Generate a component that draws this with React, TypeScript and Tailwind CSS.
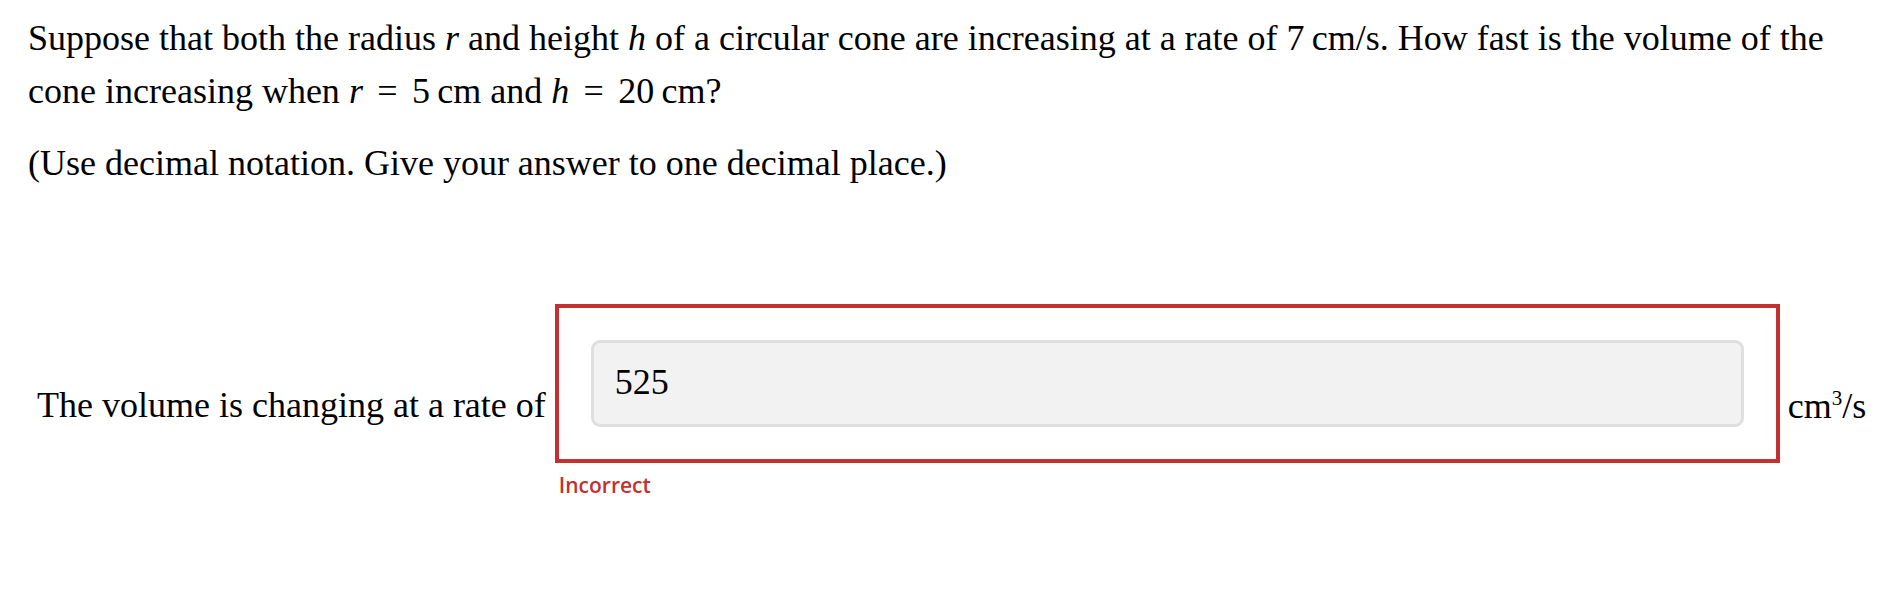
import React from "react";

export default function App() {
  const serif = { fontFamily: '"Liberation Serif", "Times New Roman", serif' };
  return (
    <div className="w-[1896px] h-[616px] bg-white text-black overflow-hidden" style={serif}>
      <div className="pl-[28px] pr-[30px] pt-[12px]">
        <p className="text-[36px] leading-[53px]">
          Suppose that both the radius <i>r</i> and height <i>h</i> of a circular cone are increasing at a rate of 7{"\u2009"}cm/s. How fast is the volume of the cone increasing when <i>r</i>
          <span className="mx-[0.4em]">=</span>5<span className="ml-[0.2em]">cm</span> and <i>h</i>
          <span className="mx-[0.4em]">=</span>20<span className="ml-[0.2em]">cm</span>?
        </p>
        <p className="text-[36px] leading-[53px] mt-[19px]">
          (Use decimal notation. Give your answer to one decimal place.)
        </p>
      </div>

      <div className="flex items-start pl-[37px] mt-[114px]">
        <div className="text-[36px] leading-[36px] mt-[83px] whitespace-nowrap">
          The volume is changing at a rate of
        </div>
        <div className="flex flex-col ml-[9px]">
          <div className="w-[1225px] h-[159px] border-[4px] border-[#c4302f] p-[32px]">
            <div className="h-[87px] rounded-[9px] border-[3px] border-[#dfdfdf] bg-[#f2f2f2] flex items-center pl-[21px] pb-[4px] text-[36px]">
              525
            </div>
          </div>
          <div
            className="mt-[10px] ml-[4px] text-[21px] leading-[1.2] font-semibold text-[#c4302f]"
            style={{ fontFamily: '"Open Sans", "Noto Sans", sans-serif' }}
          >
            Incorrect
          </div>
        </div>
        <div className="text-[36px] leading-[36px] mt-[84px] ml-[8px] whitespace-nowrap">
          cm<sup className="text-[21px] relative top-[-13px] align-baseline">3</sup>/s
        </div>
      </div>
    </div>
  );
}
